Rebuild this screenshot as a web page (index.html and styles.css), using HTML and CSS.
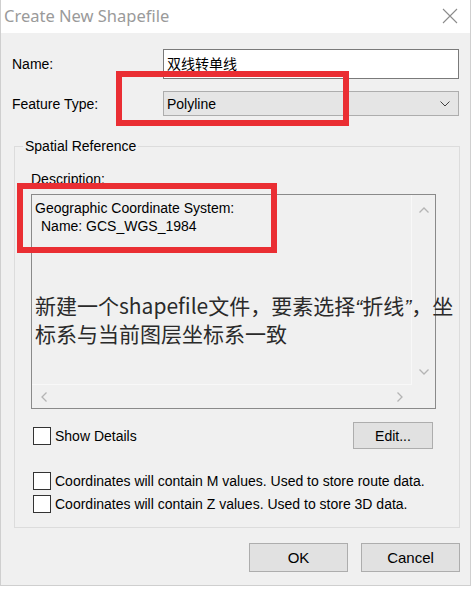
FILE: index.html
```html
<!DOCTYPE html>
<html>
<head>
<meta charset="utf-8">
<link rel="stylesheet" href="styles.css">
</head>
<body>
<div class="window">
  <div class="titlebar">
    <span class="title">Create New Shapefile</span>
    <svg class="close" width="16" height="16" viewBox="0 0 16 16"><path d="M1 1 L15 15 M15 1 L1 15" stroke="#8c8c8c" stroke-width="1.1" fill="none"/></svg>
  </div>
  <div class="content">
    <div class="row">
      <span class="lbl">Name:</span>
      <div class="input">双线转单线</div>
    </div>
    <div class="row row2">
      <span class="lbl">Feature Type:</span>
      <div class="combo">
        <span>Polyline</span>
        <svg width="10" height="6" viewBox="0 0 10 6"><path d="M0.5 0.5 L5 5 L9.5 0.5" stroke="#404040" stroke-width="1" fill="none"/></svg>
      </div>
    </div>
    <fieldset class="group">
      <legend>Spatial Reference</legend>
      <div class="desc-label">Description:</div>
      <div class="textbox">
        <div class="tb-content">
          <div>Geographic Coordinate System:</div>
          <div class="indent">Name: GCS_WGS_1984</div>
          <div class="note">新建一个shapefile文件，要素选择<span class="q">“</span>折线<span class="q">”</span>，坐<br>标系与当前图层坐标系一致</div>
        </div>
        <div class="vscroll">
          <svg width="10" height="6" viewBox="0 0 10 6"><path d="M0.5 5.5 L5 1 L9.5 5.5" stroke="#b4b4b4" stroke-width="1.3" fill="none"/></svg>
          <svg width="10" height="6" viewBox="0 0 10 6"><path d="M0.5 0.5 L5 5 L9.5 0.5" stroke="#b4b4b4" stroke-width="1.3" fill="none"/></svg>
        </div>
        <div class="hscroll">
          <svg width="6" height="10" viewBox="0 0 6 10"><path d="M5.5 0.5 L1 5 L5.5 9.5" stroke="#b4b4b4" stroke-width="1.3" fill="none"/></svg>
          <svg width="6" height="10" viewBox="0 0 6 10"><path d="M0.5 0.5 L5 5 L0.5 9.5" stroke="#b4b4b4" stroke-width="1.3" fill="none"/></svg>
        </div>
        <div class="corner"></div>
      </div>
      <div class="details-row">
        <label class="check"><span class="box"></span>Show Details</label>
        <div class="btn edit">Edit...</div>
      </div>
      <div class="opts">
        <label class="check"><span class="box"></span>Coordinates will contain M values. Used to store route data.</label>
        <label class="check"><span class="box"></span>Coordinates will contain Z values. Used to store 3D data.</label>
      </div>
    </fieldset>
    <div class="buttons">
      <div class="btn big">OK</div>
      <div class="btn big">Cancel</div>
    </div>
  </div>
  <div class="mark mark1"></div>
  <div class="mark mark2"></div>
</div>
</body>
</html>
```

FILE: styles.css
```css
* { box-sizing: border-box; }
html, body { margin: 0; padding: 0; background: #ffffff; }
body { font-family: "Liberation Sans", Arial, sans-serif; font-size: 14px; color: #000; }

.window {
  position: relative;
  width: 471px;
  height: 586px;
  background: #f0f0f0;
  border: 1px solid #cfcfcf;
  border-top: 0;
}
.titlebar {
  height: 33px;
  background: #ffffff;
  display: flex;
  align-items: center;
  justify-content: space-between;
  padding: 0 12px 0 3px;
}
.title {
  font-family: "Noto Sans", "Open Sans", sans-serif;
  font-size: 16.5px;
  color: #9a9a9a;
  margin-top: -2px;
}
.close { margin-top: -1px; }

.content { padding: 16px 11px 0 11px; }
.row { display: flex; align-items: center; height: 30px; }
.row2 { margin-top: 12px; height: 25px; }
.lbl { width: 151px; flex: none; }
.input {
  width: 296px;
  height: 30px;
  background: #fff;
  border: 1px solid #7a7a7a;
  font-family: "Noto Sans CJK SC", sans-serif;
  font-size: 14px;
  line-height: 26px;
  padding-left: 3px;
}
.combo {
  width: 296px;
  height: 25px;
  background: #e5e5e5;
  border: 1px solid #adadad;
  display: flex;
  align-items: center;
  justify-content: space-between;
  padding: 0 8px 0 3px;
}

.group {
  margin: 22px 0 0 2px;
  width: 446px;
  border: 1px solid #dcdcdc;
  padding: 0 20px 12px 16px;
  min-width: 0;
}
.group legend {
  padding: 0 2px;
  margin-left: -8px;
  line-height: 16px;
}
.desc-label { margin-top: 17px; line-height: 16px; }
.textbox {
  position: relative;
  margin-top: 7px;
  width: 405px;
  height: 215px;
  border: 1px solid #8a8a8a;
  display: grid;
  grid-template-columns: 1fr 23px;
  grid-template-rows: 1fr 23px;
}
.tb-content {
  position: relative;
  padding: 4px 0 0 3px;
  line-height: 18px;
  border-right: 1px solid #f8f8f8;
  border-bottom: 1px solid #f8f8f8;
}
.indent { padding-left: 6px; }
.note {
  position: absolute;
  left: 3px;
  top: 97px;
  white-space: nowrap;
  font-family: "Noto Sans CJK SC", sans-serif;
  font-size: 21px;
  line-height: 26px;
  color: #2a2a2a;
  z-index: 2;
}
.note .q { font-family: "Liberation Sans", sans-serif; font-style: italic; }
.vscroll {
  display: flex;
  flex-direction: column;
  align-items: center;
  justify-content: space-between;
  padding: 12px 0 10px 0;
}
.hscroll {
  display: flex;
  align-items: center;
  justify-content: space-between;
  padding: 0 9px 0 9px;
}

.details-row {
  margin: 13px 0 0 2px;
  width: 401px;
  height: 27px;
  display: flex;
  align-items: center;
  justify-content: space-between;
}
.check { display: flex; align-items: center; height: 23px; }
.box {
  width: 18px;
  height: 18px;
  background: #fff;
  border: 1px solid #333;
  margin-right: 4px;
  flex: none;
}
.btn {
  background: #e1e1e1;
  border: 1px solid #adadad;
  display: flex;
  align-items: center;
  justify-content: center;
}
.edit { width: 80px; height: 27px; margin-right: 1px; }
.opts { margin: 20px 0 0 2px; }

.buttons {
  margin-top: 15px;
  display: flex;
  justify-content: flex-end;
  gap: 13px;
  width: 448px;
}
.big { width: 99px; height: 29px; font-size: 15px; }

.mark {
  position: absolute;
  border: 6px solid #ea2e33;
  z-index: 5;
}
.mark1 { left: 115px; top: 71px; width: 233px; height: 55px; }
.mark2 { left: 16px; top: 183px; width: 260px; height: 70px; }
```
